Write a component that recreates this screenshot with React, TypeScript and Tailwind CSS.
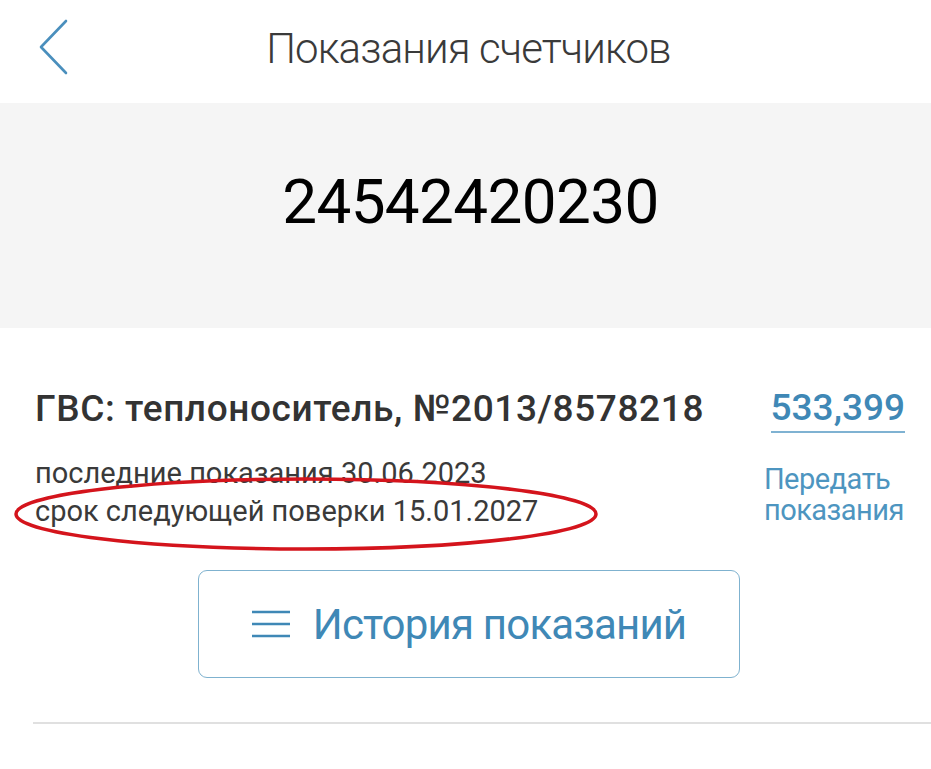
function BackIcon() {
  return (
    <svg
      width="40"
      height="60"
      viewBox="0 0 40 60"
      className="absolute left-[33px] top-[17px]"
    >
      <polyline
        points="33,4 8,30 33,56"
        fill="none"
        stroke="#4a8fbd"
        strokeWidth="2.6"
        strokeLinecap="round"
        strokeLinejoin="round"
      />
    </svg>
  );
}

function MenuIcon() {
  return (
    <svg width="40" height="30" viewBox="0 0 40 30" className="shrink-0">
      <line x1="1" y1="3" x2="39" y2="3" stroke="#3f88b6" strokeWidth="2.4" />
      <line x1="1" y1="15" x2="39" y2="15" stroke="#3f88b6" strokeWidth="2.4" />
      <line x1="1" y1="27" x2="39" y2="27" stroke="#3f88b6" strokeWidth="2.4" />
    </svg>
  );
}

export default function App() {
  return (
    <div className="w-[931px] h-[769px] bg-white overflow-hidden font-['Roboto','Liberation_Sans',sans-serif]">
      <div className="relative h-[103px] flex items-center justify-center">
        <BackIcon />
        <h1 className="ml-[6px] text-[42px] font-light text-[#3a3a3a] tracking-[-0.9px] -mt-[6px]">
          Показания счетчиков
        </h1>
      </div>

      <div className="h-[225px] bg-[#f5f5f5] flex items-start justify-center pt-[52px]">
        <span className="ml-[10px] text-[62px] font-normal text-black tracking-[-0.6px]">
          24542420230
        </span>
      </div>

      <div className="px-[35px] pt-[57px]">
        <div className="flex items-start justify-between">
          <div>
            <h2 className="text-[37px] font-medium text-[#333] tracking-[0.6px] leading-[48px]">
              ГВС: теплоноситель, №2013/8578218
            </h2>
            <div className="mt-[21px] text-[29px] text-[#3a3a3a] leading-[38px] relative">
              <p>последние показания 30.06.2023</p>
              <p>срок следующей поверки 15.01.2027</p>
              <svg
                className="absolute left-[-22px] top-[22px] pointer-events-none"
                width="590"
                height="80"
                viewBox="0 0 590 80"
              >
                <ellipse
                  cx="293"
                  cy="38"
                  rx="290"
                  ry="35"
                  fill="none"
                  stroke="#d4141c"
                  strokeWidth="3.5"
                />
              </svg>
            </div>
          </div>
          <div className="flex flex-col items-end -mr-[9px]">
            <span className="text-[37px] font-medium text-[#3f88b6] leading-[46px] border-b-2 border-[#7fb2d2]">
              533,399
            </span>
            <div className="mt-[31px] mr-[1px] text-[29px] text-[#4d95c0] leading-[31px] tracking-[-0.5px] text-left">
              <p>Передать</p>
              <p>показания</p>
            </div>
          </div>
        </div>

        <div className="flex justify-center mt-[40px]">
          <button className="w-[542px] h-[108px] ml-[6px] border border-[#7fb2cf] rounded-[9px] flex items-center justify-center gap-[22px]">
            <MenuIcon />
            <span className="text-[42px] text-[#3f88b6] tracking-[-0.8px]">История показаний</span>
          </button>
        </div>
      </div>

      <div className="ml-[33px] mt-[44px] border-t-2 border-[#e0e0e0]" />
    </div>
  );
}
